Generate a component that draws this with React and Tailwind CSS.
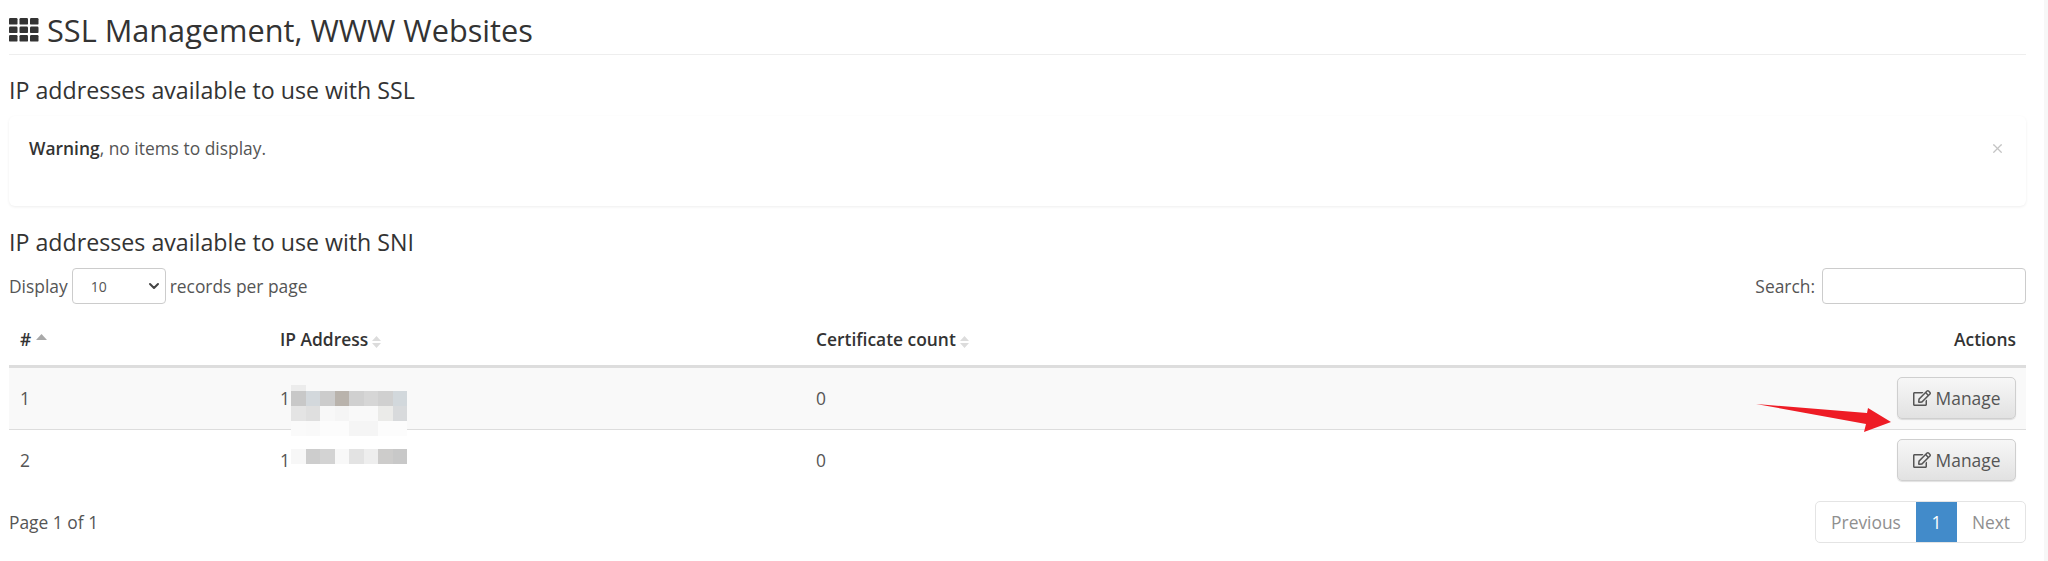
import { FaRegEdit } from 'react-icons/fa';
import { ChevronDown, X } from 'lucide-react';

// mosaic over the blurred ip addresses
const mosaicOne = [
  ['bg-[#ececec]', 'bg-transparent', 'bg-transparent', 'bg-transparent', 'bg-transparent', 'bg-transparent', 'bg-transparent', 'bg-transparent'],
  ['bg-[#c8c8c8]', 'bg-[#d3d8dc]', 'bg-[#cccccc]', 'bg-[#b9b3ac]', 'bg-[#d0d0d0]', 'bg-[#d6d6d6]', 'bg-[#d0d0d0]', 'bg-[#d2d8dc]'],
  ['bg-[#e4e4e4]', 'bg-[#dfdfdf]', 'bg-[#f8f8f8]', 'bg-[#f5f5f5]', 'bg-[#f9f9f9]', 'bg-[#f9f9f9]', 'bg-[#ebebe9]', 'bg-[#d8dadc]'],
  ['bg-[#fafafa]', 'bg-[#f9f9f9]', 'bg-[#fcfcfc]', 'bg-[#fcfcfc]', 'bg-[#f5f5f5]', 'bg-[#f5f5f5]', 'bg-[#fcfcfc]', 'bg-[#fcfcfc]'],
];
const mosaicTwo = [
  ['bg-[#f7f7f7]', 'bg-[#cdcdcd]', 'bg-[#d3d3d3]', 'bg-[#f8f8f8]', 'bg-[#e3e3e3]', 'bg-[#eeeeee]', 'bg-[#cdcccb]', 'bg-[#c8c8c8]'],
];

const Mosaic = ({ cells, className }) => (
  <div className={`absolute left-[20px] w-[116px] ${className}`}>
    {cells.map((row, r) => (
      <div key={r} className={`flex ${r === 0 && cells.length > 1 ? 'h-[6px]' : 'h-[15px]'}`}>
        {row.map((c, i) => (
          <div key={i} className={`flex-1 ${c}`}></div>
        ))}
      </div>
    ))}
  </div>
);

const GridIcon = () => (
  <svg width="30" height="24" viewBox="0 0 30 24" className="shrink-0 text-[#333]" fill="currentColor">
    {[0, 8.5, 17].map((y) =>
      [0, 10.5, 21].map((x) => <rect key={`${x}-${y}`} x={x} y={y} width="8.5" height="6.6" rx="1.2" />)
    )}
  </svg>
);

const SortIcon = () => (
  <svg width="9" height="12" viewBox="0 0 9 12" className="inline-block ml-1 text-[#dcdcdc]" fill="currentColor">
    <path d="M4.5 0L9 5H0zM4.5 12L0 7h9z" />
  </svg>
);

const ManageButton = () => (
  <button className="w-[119px] h-[42px] inline-flex items-center justify-center gap-[5px] rounded-[5px] border border-[#cfcfcf] bg-gradient-to-b from-[#f7f7f7] to-[#e2e2e2] shadow-[0_1px_1px_rgba(0,0,0,0.12)] text-[#555] text-[17.4px]">
    <FaRegEdit size={18} />
    Manage
  </button>
);

const App = () => (
  <div className="relative h-[561px] bg-white overflow-hidden font-['Open_Sans',sans-serif] text-[17.4px] text-[#555]">
    <div className="absolute top-0 right-0 bottom-0 w-[4px] bg-[#f7f7f7]"></div>
    <div className="w-[2017px] ml-[9px]">
      <h1 className="h-[55px] pt-[5px] flex items-center gap-[8px] border-b border-[#eeeeee] text-[30.7px] leading-[38px] text-[#333]">
        <GridIcon />
        SSL Management, WWW Websites
      </h1>

      <h3 className="mt-[20px] text-[23.2px] leading-[30px] text-[#333] font-medium">IP addresses available to use with SSL</h3>

      <div className="mt-[11px] h-[90px] pl-[20px] pr-[20px] pt-[20px] flex justify-between rounded-[6px] shadow-[0_1px_3px_rgba(0,0,0,0.07)]">
        <p className="leading-[24px]"><strong className="font-semibold text-[#333]">Warning</strong>, no items to display.</p>
        <X size={15} className="mt-[5px] mr-[1px] text-[#c4c4c4]" />
      </div>

      <h3 className="mt-[21px] text-[23.2px] leading-[30px] text-[#333] font-medium">IP addresses available to use with SNI</h3>

      <div className="mt-[11px] flex justify-between items-center h-[36px]">
        <div className="flex items-center gap-[4px]">
          Display
          <div className="w-[94px] h-[36px] px-[18px] flex items-center justify-between rounded-[4px] border border-[#cccccc] text-[14px]">
            10
            <ChevronDown size={16} strokeWidth={3} className="mr-[-15px] text-[#444]" />
          </div>
          records per page
        </div>
        <div className="flex items-center gap-[7px]">
          Search:
          <div className="w-[204px] h-[36px] rounded-[4px] border border-[#cccccc]"></div>
        </div>
      </div>

      <table className="mt-[8px] w-full table-fixed">
        <thead>
          <tr className="h-[54px] border-b-[3px] border-[#dddddd] text-[#333] text-left">
            <th className="w-[262px] pl-[11px] pt-[2px] font-semibold">
              #
              <svg width="11" height="6" viewBox="0 0 11 6" className="inline-block ml-[5px] mb-[9px] text-[#a9a9a9]" fill="currentColor">
                <path d="M5.5 0L11 6H0z" />
              </svg>
            </th>
            <th className="w-[536px] pl-[9px] pt-[2px] font-semibold">IP Address<SortIcon /></th>
            <th className="pl-[9px] pt-[2px] font-semibold">Certificate count<SortIcon /></th>
            <th className="w-[200px] pr-[10px] pt-[2px] text-right font-semibold">Actions</th>
          </tr>
        </thead>
        <tbody>
          <tr className="h-[63px] bg-[#f9f9f9] border-b border-[#dddddd]">
            <td className="pl-[11px]">1</td>
            <td className="pl-[9px] relative">1<Mosaic cells={mosaicOne} className="top-[17px]" /></td>
            <td className="pl-[9px]">0</td>
            <td className="pr-[10px] text-right"><ManageButton /></td>
          </tr>
          <tr className="h-[62px]">
            <td className="pl-[11px]">2</td>
            <td className="pl-[9px] relative">1<Mosaic cells={mosaicTwo} className="top-[19px]" /></td>
            <td className="pl-[9px]">0</td>
            <td className="pr-[10px] text-right"><ManageButton /></td>
          </tr>
        </tbody>
      </table>

      <div className="mt-[10px] flex justify-between items-center">
        <span>Page 1 of 1</span>
        <div className="flex h-[42px] rounded-[5px] border border-[#e4e4e4] text-[#8f8f8f] overflow-hidden">
          <span className="w-[100px] flex items-center justify-center">Previous</span>
          <span className="w-[41px] flex items-center justify-center bg-[#428bca] text-white">1</span>
          <span className="flex-1 w-[68px] flex items-center justify-center">Next</span>
        </div>
      </div>
    </div>

    {/* red annotation arrow */}
    <svg className="absolute left-[1750px] top-[400px] text-[#ee1c25]" width="150" height="40" viewBox="1750 400 150 40" fill="currentColor">
      <path d="M1756 404L1867 413L1868 408L1891 422L1864 432L1866 424Z" />
    </svg>
  </div>
);

export default App;
